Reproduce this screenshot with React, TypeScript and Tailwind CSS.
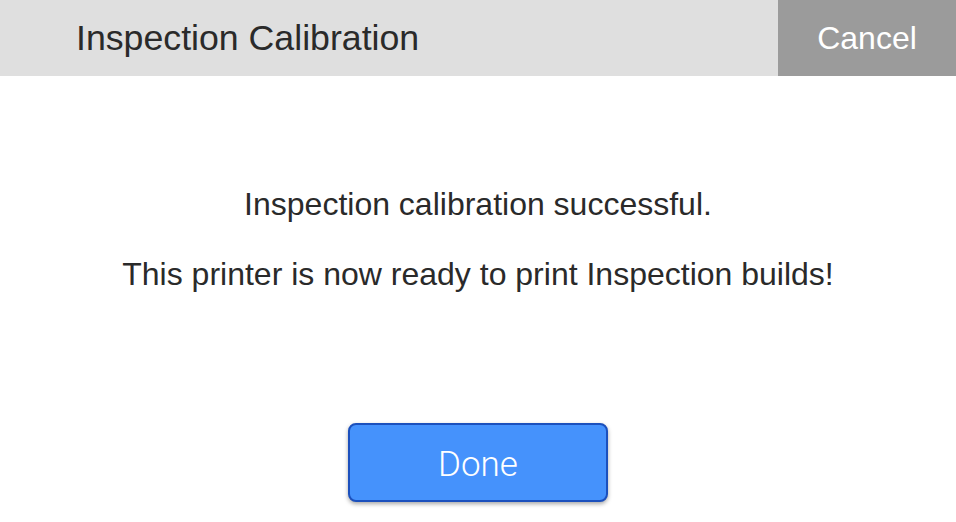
import React from "react";

const App: React.FC = () => {
  return (
    <div className="w-[956px] h-[522px] bg-white flex flex-col font-['Liberation_Sans',Arial,sans-serif] text-[#2a2a2a]">
      {/* Header */}
      <div className="h-[76px] flex bg-[#dfdfdf]">
        <div className="flex-1 flex items-center pl-[76px] pt-[1px] text-[35.7px]">Inspection Calibration</div>
        <button className="w-[178px] bg-[#9b9b9b] text-white text-[32px] flex items-center justify-center">
          Cancel
        </button>
      </div>

      {/* Body */}
      <div className="flex flex-col items-center pt-[108px] text-[32px] leading-[40px]">
        <p>Inspection calibration successful.</p>
        <p className="mt-[30px]">This printer is now ready to print Inspection builds!</p>
        <button className="mt-[129px] w-[260px] h-[79px] pt-[4px] rounded-[8px] border-2 border-[#1b50bd] bg-[#4592fc] text-white font-['Roboto',sans-serif] font-light text-[35px] flex items-center justify-center shadow-[0_2px_4px_rgba(0,0,0,0.35)]">
          Done
        </button>
      </div>
    </div>
  );
};

export default App;
